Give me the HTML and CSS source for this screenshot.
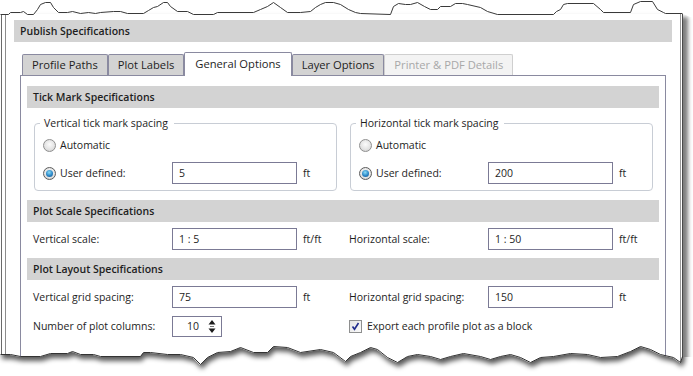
FILE: index.html
```html
<!DOCTYPE html>
<html>
<head>
<meta charset="utf-8">
<link rel="stylesheet" href="styles.css">
</head>
<body>
<div class="page">
  <div class="frame">
    <div class="dialog">
      <div class="title-bar">Publish Specifications</div>
      <div class="tabs">
        <div class="tab">Profile Paths</div>
        <div class="tab">Plot Labels</div>
        <div class="tab active">General Options</div>
        <div class="tab">Layer Options</div>
        <div class="tab disabled">Printer &amp; PDF Details</div>
      </div>
      <div class="panel">
        <div class="section-bar">Tick Mark Specifications</div>
        <div class="two-col">
          <fieldset class="group">
            <legend>Vertical tick mark spacing</legend>
            <div class="opt-row"><span class="radio"></span>Automatic</div>
            <div class="opt-row with-input">
              <span class="opt-label"><span class="radio on"></span>User defined:</span>
              <span class="input">5</span><span class="unit">ft</span>
            </div>
          </fieldset>
          <fieldset class="group">
            <legend>Horizontal tick mark spacing</legend>
            <div class="opt-row"><span class="radio"></span>Automatic</div>
            <div class="opt-row with-input">
              <span class="opt-label"><span class="radio on"></span>User defined:</span>
              <span class="input">200</span><span class="unit">ft</span>
            </div>
          </fieldset>
        </div>

        <div class="section-bar gap-after-group">Plot Scale Specifications</div>
        <div class="form-row">
          <div class="cell"><span class="label">Vertical scale:</span><span class="input">1 : 5</span><span class="unit">ft/ft</span></div>
          <div class="cell"><span class="label">Horizontal scale:</span><span class="input">1 : 50</span><span class="unit">ft/ft</span></div>
        </div>

        <div class="section-bar gap-after-row">Plot Layout Specifications</div>
        <div class="form-row">
          <div class="cell"><span class="label">Vertical grid spacing:</span><span class="input">75</span><span class="unit">ft</span></div>
          <div class="cell"><span class="label">Horizontal grid spacing:</span><span class="input">150</span><span class="unit">ft</span></div>
        </div>
        <div class="form-row second">
          <div class="cell short"><span class="label">Number of plot columns:</span>
            <span class="spinner"><span class="spin-val">10</span>
              <svg class="spin-arrows" width="10" height="17" viewBox="0 0 10 17">
                <path d="M1.5 6.5 L5 2 L8.5 6.5 Z" fill="#1a1a1a"/>
                <rect x="3" y="8" width="4" height="1" fill="#777"/>
                <path d="M1.5 10.5 L8.5 10.5 L5 15 Z" fill="#1a1a1a"/>
              </svg>
            </span>
          </div>
          <div class="cell short"><span class="checkbox"><svg width="11" height="11" viewBox="0 0 11 11"><path d="M2.5 5.5 L4.5 8.3 L8.5 2" fill="none" stroke="#1f2b8c" stroke-width="1.6"/></svg></span>Export each profile plot as a block</div>
        </div>
      </div>
    </div>
  </div>

  <svg class="torn-top" width="693" height="24" viewBox="0 0 693 24">
    <path fill="#fff" d="M0,0 L0,15 L8,15 L10,13 L20,13 L23,12 L27,15 L33,15 L37,10 L40,5 L45,3 L50,3 L53,8 L58,13 L67,13 L72,12 L80,14 L88,13 L95,14 L100,13 L113,12 L120,12 L127,14 L143,14 L148,11 L153,8 L157,7 L163,3 L167,3 L170,7 L177,12 L187,12 L193,15 L213,15 L217,13 L253,13 L260,10 L267,7 L273,3 L280,8 L287,13 L300,13 L310,12 L315,8 L320,5 L325,3 L333,3 L340,5 L348,10 L355,13 L360,14 L390,15 L393,7 L398,4 L405,5 L410,5 L417,3 L424,7 L430,10 L437,10 L440,7 L450,7 L455,4 L462,4 L467,5 L480,8 L487,12 L497,15 L553,15 L556,12 L560,10 L563,5 L567,4 L593,4 L600,10 L603,13 L630,13 L633,5 L640,2 L652,2 L657,10 L663,13 L665,14 L683,14 L693,18 L693,0 Z"/>
    <polyline fill="none" stroke="#3a3a3a" stroke-width="1" transform="translate(0.5,0.5)" points="0,14 8,14 10,12 20,12 23,11 27,14 33,14 37,9 40,4 45,2 50,2 53,7 58,12 67,12 72,11 80,13 88,12 95,13 100,12 113,11 120,11 127,13 143,13 148,10 153,7 157,6 163,2 167,2 170,6 177,11 187,11 193,14 213,14 217,12 253,12 260,9 267,6 273,2 280,7 287,12 300,12 310,11 315,7 320,4 325,2 333,2 340,4 348,9 355,12 360,13 390,14 393,6 398,3 405,4 410,4 417,2 424,6 430,9 437,9 440,6 450,6 455,3 462,3 467,4 480,7 487,11 497,14 553,14 556,11 560,9 563,4 567,3 593,3 600,9 603,12 630,12 633,4 640,1 652,1 657,9 663,12 665,13 682,13"/>
  </svg>

  <svg class="torn-bottom" width="693" height="40" viewBox="0 336 693 40">
    <defs>
      <clipPath id="below">
        <path d="M0,355 L10,355 L20,357 L40,357 L50,354 L67,354 L72,352 L80,355 L93,355 L100,357 L140,357 L143,353 L150,353 L167,355 L180,355 L193,358 L200,365 L207,358 L217,353 L230,352 L240,348 L253,353 L267,353 L273,347 L287,348 L300,353 L320,350 L333,353 L345,362 L350,357 L360,353 L370,348 L377,350 L387,358 L397,363 L407,357 L417,355 L430,357 L440,360 L450,357 L463,354 L480,357 L490,360 L500,357 L510,355 L520,358 L530,363 L540,358 L553,357 L570,354 L587,355 L600,358 L617,357 L630,352 L640,347 L650,350 L660,355 L673,358 L680,363 L683,357 L693,357 L693,376 L0,376 Z"/>
      </clipPath>
      <filter id="blur" x="-10%" y="-50%" width="120%" height="200%">
        <feGaussianBlur stdDeviation="2.6"/>
      </filter>
    </defs>
    <path fill="#fff" d="M0,355 L10,355 L20,357 L40,357 L50,354 L67,354 L72,352 L80,355 L93,355 L100,357 L140,357 L143,353 L150,353 L167,355 L180,355 L193,358 L200,365 L207,358 L217,353 L230,352 L240,348 L253,353 L267,353 L273,347 L287,348 L300,353 L320,350 L333,353 L345,362 L350,357 L360,353 L370,348 L377,350 L387,358 L397,363 L407,357 L417,355 L430,357 L440,360 L450,357 L463,354 L480,357 L490,360 L500,357 L510,355 L520,358 L530,363 L540,358 L553,357 L570,354 L587,355 L600,358 L617,357 L630,352 L640,347 L650,350 L660,355 L673,358 L680,363 L683,357 L693,357 L693,376 L0,376 Z"/>
    <g clip-path="url(#below)">
      <path fill="#000" fill-opacity="0.65" filter="url(#blur)" transform="translate(2,4)" d="M0,320 L683,320 L683,357 L680,363 L673,358 L660,355 L650,350 L640,347 L630,352 L617,357 L600,358 L587,355 L570,354 L553,357 L540,358 L530,363 L520,358 L510,355 L500,357 L490,360 L480,357 L463,354 L450,357 L440,360 L430,357 L417,355 L407,357 L397,363 L387,358 L377,350 L370,348 L360,353 L350,357 L345,362 L333,353 L320,350 L300,353 L287,348 L273,347 L267,353 L253,353 L240,348 L230,352 L217,353 L207,358 L200,365 L193,358 L180,355 L167,355 L150,353 L143,353 L140,357 L100,357 L93,355 L80,355 L72,352 L67,354 L50,354 L40,357 L20,357 L10,355 L0,355 Z"/>
    </g>
    <polyline fill="none" stroke="#333" stroke-width="1" transform="translate(0.5,-0.5)" points="0,355 10,355 20,357 40,357 50,354 67,354 72,352 80,355 93,355 100,357 140,357 143,353 150,353 167,355 180,355 193,358 200,365 207,358 217,353 230,352 240,348 253,353 267,353 273,347 287,348 300,353 320,350 333,353 345,362 350,357 360,353 370,348 377,350 387,358 397,363 407,357 417,355 430,357 440,360 450,357 463,354 480,357 490,360 500,357 510,355 520,358 530,363 540,358 553,357 570,354 587,355 600,358 617,357 630,352 640,347 650,350 660,355 673,358 680,363 682,357"/>
  </svg>
</div>
</body>
</html>
```

FILE: styles.css
```css
* { box-sizing: border-box; }
html, body { margin: 0; padding: 0; background: #fff; }
body {
  font-family: "Open Sans", "Noto Sans", sans-serif;
  font-size: 10.5px;
  line-height: 15px;
  color: #1e1e1e;
}
.page {
  position: relative;
  width: 693px;
  height: 376px;
  overflow: hidden;
  background: #fff;
}
.frame {
  margin: 14px 10px 0 1px;
  height: 362px;
  border-left: 1px solid #6a6a6a;
  border-right: 1px solid #4a4a4a;
  padding: 0 1px 0 3px;
  background: #fff;
  box-shadow: 5px 3px 4px rgba(0, 0, 0, 0.5);
}
.dialog {
  height: 100%;
  border-left: 1px solid #8c8c8c;
  border-right: 1px solid #9a9a9a;
  padding: 6px 8px 0 8px;
  display: flex;
  flex-direction: column;
}
.title-bar {
  height: 22px;
  background: #d3d3d3;
  padding-left: 6px;
  line-height: 22px;
  font-weight: 600;
}
.tabs {
  display: flex;
  align-items: flex-end;
  height: 23px;
  margin: 10px 0 0 8px;
  position: relative;
  z-index: 1;
}
.tab {
  height: 21px;
  padding: 0 9px;
  border: 1px solid #8a8aa0;
  border-bottom: none;
  background: #d3d3d3;
  font-size: 11.2px;
  line-height: 19px;
  border-radius: 2px 2px 0 0;
  white-space: nowrap;
}
.tab.active {
  height: 24px;
  background: #fff;
  margin-bottom: -1px;
  line-height: 21px;
  padding: 0 10px;
}
.tab.disabled {
  background: #f3f3f3;
  border-color: #cfcfcf;
  color: #a8a8a8;
}
.panel {
  flex: 1;
  margin: 0 6px;
  border: 1px solid #8a8aa0;
  border-bottom: none;
  padding: 10px 6px 0;
  background: #fff;
}
.section-bar {
  height: 22px;
  background: #d3d3d3;
  padding-left: 6px;
  line-height: 22px;
  font-weight: 600;
}
.section-bar.gap-after-group { margin-top: 9px; }
.section-bar.gap-after-row { margin-top: 8px; }
.two-col {
  display: grid;
  grid-template-columns: 316px 316px;
}
.group {
  margin: 8px 6px 0 7px;
  padding: 0 8px 6px;
  border: 1px solid #c8cdd5;
  border-radius: 4px;
  min-width: 0;
}
.group legend {
  margin-left: -3px;
  padding: 0 6px 0 4px;
  line-height: 15px;
}
.opt-row {
  display: flex;
  align-items: center;
  height: 20px;
  margin-top: 4px;
}
.opt-row.with-input {
  height: 22px;
  margin-top: 7px;
}
.opt-label {
  width: 129px;
  display: flex;
  align-items: center;
}
.radio {
  position: relative;
  flex: none;
  width: 13px;
  height: 13px;
  margin-right: 4px;
  border-radius: 50%;
  border: 1px solid #8f8f8f;
  background: radial-gradient(circle at 50% 40%, #fbfbfb 0%, #e2e2e2 60%, #c6c6c6 100%);
}
.radio.on { border-color: #5c5c5c; }
.radio.on::after {
  content: "";
  position: absolute;
  left: 2px;
  top: 2px;
  width: 7px;
  height: 7px;
  border-radius: 50%;
  background: radial-gradient(circle at 45% 35%, #8adcf7 0%, #2a86c6 55%, #144f86 100%);
}
.input {
  flex: none;
  width: 125px;
  height: 22px;
  border: 1px solid #7b7a95;
  padding-left: 6px;
  line-height: 20px;
  background: #fff;
}
.unit { margin-left: 6px; }
.form-row {
  display: grid;
  grid-template-columns: 316px 316px;
  margin-top: 6px;
}
.form-row.second { margin-top: 8px; }
.cell {
  display: flex;
  align-items: center;
  height: 22px;
  padding-left: 6px;
}
.cell.short { height: 21px; }
.cell .label { width: 139px; flex: none; }
.spinner {
  display: flex;
  align-items: center;
  width: 50px;
  height: 21px;
  border: 1px solid #7b7a95;
}
.spin-val {
  flex: 1;
  text-align: right;
  padding-right: 8px;
}
.spin-arrows {
  margin-right: 4px;
}
.checkbox {
  display: flex;
  align-items: center;
  justify-content: center;
  flex: none;
  width: 13px;
  height: 13px;
  margin-right: 5px;
  border: 1px solid #8e8f8f;
  background: linear-gradient(135deg, #e4e4e4, #fafafa);
}
.torn-top {
  position: absolute;
  left: 0;
  top: 0;
}
.torn-bottom {
  position: absolute;
  left: 0;
  top: 336px;
}
```
